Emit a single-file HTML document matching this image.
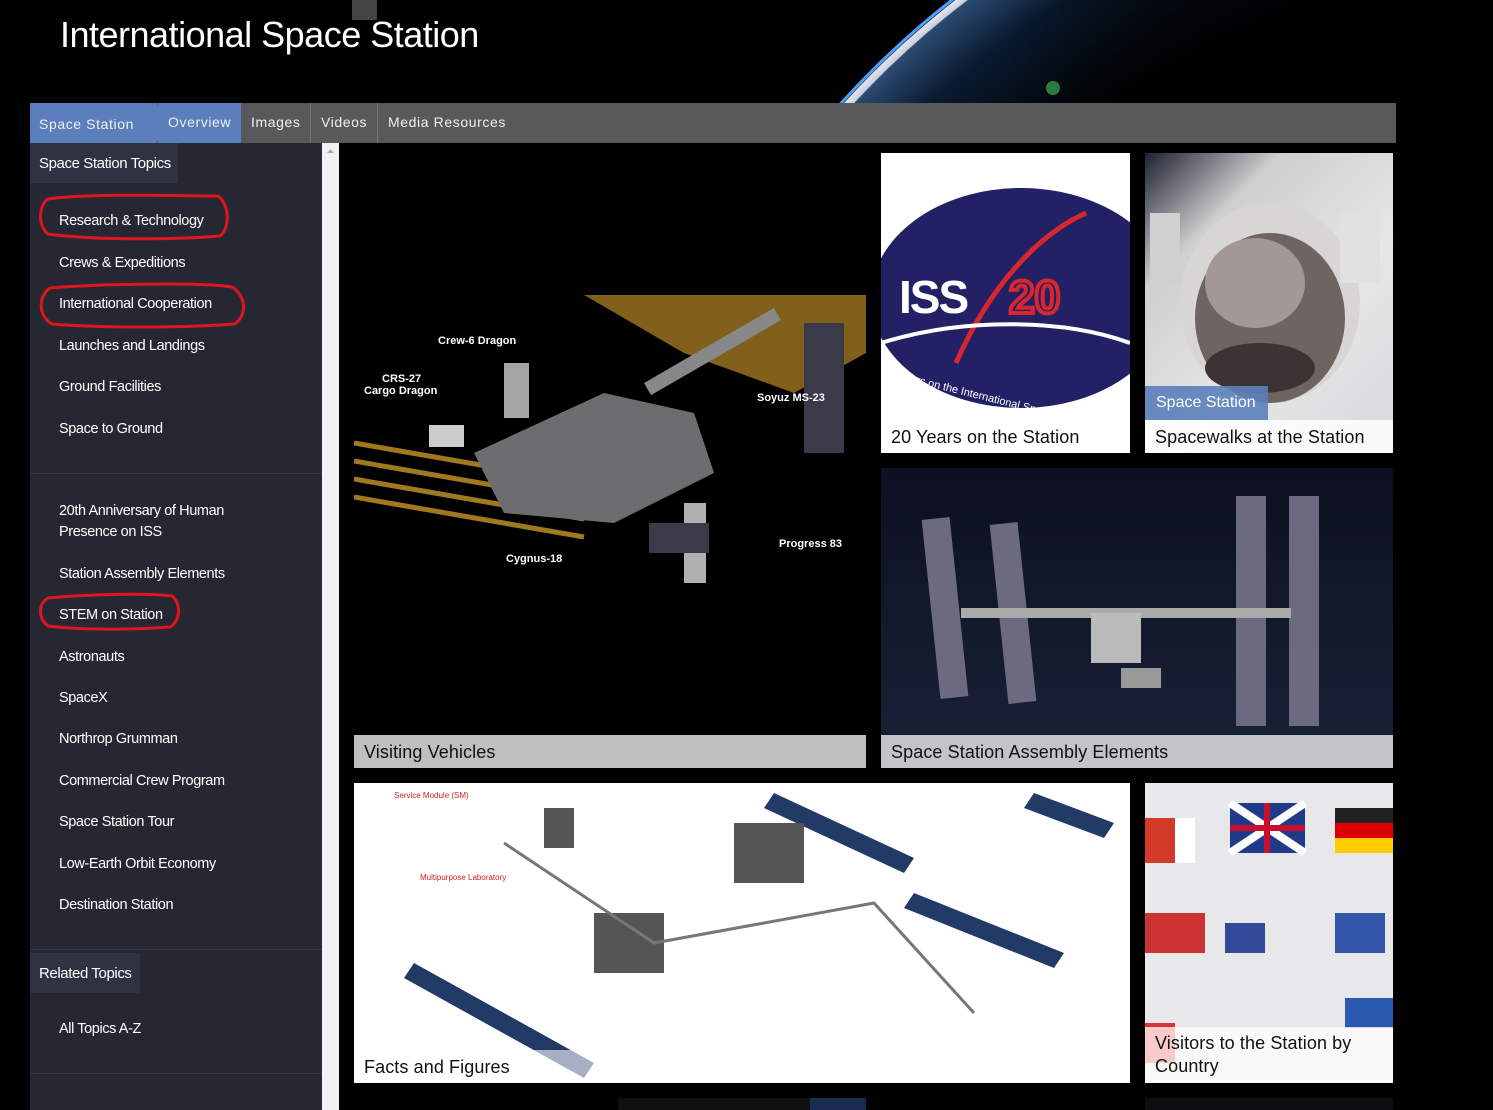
<!DOCTYPE html>
<html style="overflow:hidden"><head><meta charset="utf-8"><style>
*{margin:0;padding:0;box-sizing:border-box}
body{width:1493px;height:1110px;background:#000;overflow:hidden;position:relative;font-family:"Liberation Sans",sans-serif;color:#fff}
.abs{position:absolute}
h1{position:absolute;left:60px;top:14px;font-size:36px;font-weight:normal;letter-spacing:-0.5px;color:#fff}
.nav{position:absolute;left:30px;top:103px;width:1366px;height:40px;background:#595959}
.nav div{position:absolute;top:0;height:40px;line-height:38px;font-size:14px;letter-spacing:0.6px;color:#f0f0f0}
.side{position:absolute;left:30px;top:143px;width:292px;height:967px;background:#252832;overflow:hidden}
.sb{position:absolute;left:322px;top:143px;width:17px;height:967px;background:#f1f1f1}
.hd{position:absolute;left:0;height:40px;background:#2f3240;font-size:15px;line-height:42px;padding-left:9px;letter-spacing:-0.4px}
.it{position:absolute;left:29px;font-size:14.5px;letter-spacing:-0.4px;line-height:21px;color:#fff}
.sep{position:absolute;left:0;width:292px;height:1px;background:#333746}
.cap{position:absolute;left:0;right:0;bottom:0;height:33px;background:rgba(225,225,225,0.85);color:#111;font-size:18px;line-height:34px;padding-left:10px;letter-spacing:0.1px}
.tile{position:absolute;overflow:hidden}
</style></head><body>
<svg class="abs" style="left:0;top:0" width="1493" height="103">
<defs><radialGradient id="rg" cx="1500" cy="700" r="887" gradientUnits="userSpaceOnUse"><stop offset="0.8" stop-color="#000"/><stop offset="0.93" stop-color="#0a1a30"/><stop offset="0.99" stop-color="#2a4a70"/><stop offset="1" stop-color="#d8dce8"/></radialGradient>
<linearGradient id="fade" x1="0" y1="0" x2="1" y2="0"><stop offset="0" stop-color="#000" stop-opacity="0"/><stop offset="1" stop-color="#000"/></linearGradient></defs>
<circle cx="1500" cy="700" r="887" fill="url(#rg)"/>
<circle cx="1500" cy="700" r="889" fill="none" stroke="#4aa0ff" stroke-width="3"/>
<circle cx="1500" cy="700" r="883" fill="none" stroke="#e8e8f0" stroke-width="7" opacity="0.8"/>
<rect x="1000" y="0" width="400" height="103" fill="url(#fade)"/>
<rect x="1390" y="0" width="103" height="103" fill="#000"/>
<circle cx="1053" cy="88" r="7" fill="#2d7a3d"/>
<rect x="352" y="0" width="25" height="20" fill="#444"/>
</svg>
<h1>International Space Station</h1>
<div class="nav">
<div style="left:0;width:126px;background:#5b7fbd;padding-left:9px;line-height:42px">Space Station</div>
<svg class="abs" style="left:126px;top:0" width="14" height="40"><polygon points="0,0 14,20 0,40" fill="#5b7fbd"/></svg>
<div style="left:128px;width:83px;background:#5b7fbd;padding-left:10px">Overview</div>
<div style="left:211px;width:70px;padding-left:10px;border-right:1px solid #777">Images</div>
<div style="left:282px;width:66px;padding-left:9px;border-right:1px solid #777">Videos</div>
<div style="left:349px;padding-left:9px">Media Resources</div>
</div>
<div class="side">
<div class="hd" style="top:0;width:148px">Space Station Topics</div>
<div class="it" style="top:68px">Research &amp; Technology</div>
<div class="it" style="top:110px">Crews &amp; Expeditions</div>
<div class="it" style="top:151px">International Cooperation</div>
<div class="it" style="top:193px">Launches and Landings</div>
<div class="it" style="top:234px">Ground Facilities</div>
<div class="it" style="top:276px">Space to Ground</div>
<div class="sep" style="top:330px"></div>
<div class="it" style="top:358px">20th Anniversary of Human<br>Presence on ISS</div>
<div class="it" style="top:421px">Station Assembly Elements</div>
<div class="it" style="top:462px">STEM on Station</div>
<div class="it" style="top:504px">Astronauts</div>
<div class="it" style="top:545px">SpaceX</div>
<div class="it" style="top:586px">Northrop Grumman</div>
<div class="it" style="top:628px">Commercial Crew Program</div>
<div class="it" style="top:669px">Space Station Tour</div>
<div class="it" style="top:711px">Low-Earth Orbit Economy</div>
<div class="it" style="top:752px">Destination Station</div>
<div class="sep" style="top:806px"></div>
<div class="hd" style="top:810px;width:110px">Related Topics</div>
<div class="it" style="top:876px">All Topics A-Z</div>
<div class="sep" style="top:930px"></div>
</div>
<div class="sb"><svg width="17" height="14"><polygon points="5,10 12,10 8.5,6" fill="#a8a8a8"/></svg></div>
<svg class="abs" style="left:0;top:0;pointer-events:none;z-index:5" width="340" height="1110" fill="none" stroke="#e0141c" stroke-width="3">
<path d="M48,199 C90,193 180,196 218,196 C230,205 230,228 220,236 C170,240 90,240 48,234 C38,226 38,206 48,199 Z"/>
<path d="M50,288 C100,284 200,282 232,287 C248,297 246,318 234,324 C180,328 100,328 52,324 C38,316 38,296 50,288 Z"/>
<path d="M48,598 C90,594 150,593 172,596 C182,604 180,622 170,627 C130,630 80,630 48,626 C38,618 38,604 48,598 Z"/>
</svg>
<div class="tile" style="left:354px;top:153px;width:512px;height:615px;background:#000">
<svg width="512" height="582">
<polygon points="230,142 512,142 512,200 440,240 330,200" fill="#a07820" opacity="0.8"/>
<g stroke="#a07820" stroke-width="5"><line x1="0" y1="290" x2="230" y2="330"/><line x1="0" y1="308" x2="230" y2="348"/><line x1="0" y1="326" x2="230" y2="366"/><line x1="0" y1="344" x2="230" y2="384"/></g>
<polygon points="120,300 250,240 340,260 360,320 260,370 150,360" fill="#6d6d70"/>
<rect x="290" y="230" width="150" height="14" fill="#888" transform="rotate(-30 290 230)"/>
<rect x="330" y="350" width="22" height="80" fill="#b0b0b0"/>
<rect x="150" y="210" width="25" height="55" fill="#a5a5a5"/>
<rect x="75" y="272" width="35" height="22" fill="#ccc"/>
<g fill="#3a3a48"><rect x="450" y="170" width="40" height="130"/><rect x="295" y="370" width="60" height="30"/></g>
<g fill="#fff" font-size="11" font-weight="bold"><text x="84" y="191">Crew-6 Dragon</text><text x="28" y="229">CRS-27</text><text x="10" y="241">Cargo Dragon</text><text x="403" y="248">Soyuz MS-23</text><text x="425" y="394">Progress 83</text><text x="152" y="409">Cygnus-18</text></g>
</svg>
<div class="cap">Visiting Vehicles</div></div>
<div class="tile" style="left:881px;top:153px;width:249px;height:300px;background:#fff">
<svg width="249" height="300"><ellipse cx="140" cy="145" rx="150" ry="110" fill="#232166"/>
<path d="M75,210 C110,130 160,80 205,60" stroke="#d8262e" stroke-width="5" fill="none"/>
<path d="M0,190 C80,165 180,165 249,190" stroke="#fff" stroke-width="4" fill="none"/>
<text x="18" y="160" fill="#fff" font-size="46" font-weight="bold" letter-spacing="-2">ISS</text>
<text x="128" y="160" fill="none" stroke="#d8262e" stroke-width="4" font-size="46" font-weight="bold">20</text>
<text x="2" y="222" fill="#fff" font-size="11" transform="rotate(14 2 222)">20 Years on the International Space Station</text></svg>
<div class="cap" style="background:rgba(255,255,255,0.92)">20 Years on the Station</div></div>
<div class="tile" style="left:1145px;top:153px;width:248px;height:300px;background:linear-gradient(135deg,#1c2030 0%,#cfcfcf 25%,#e6e6e6 60%,#d8d8dc 100%)">
<svg width="248" height="300"><ellipse cx="125" cy="150" rx="90" ry="100" fill="#d8d6d4"/><ellipse cx="125" cy="165" rx="75" ry="85" fill="#6e6462"/><ellipse cx="110" cy="130" rx="50" ry="45" fill="#a49896"/><ellipse cx="115" cy="215" rx="55" ry="25" fill="#3c3432"/><rect x="195" y="60" width="40" height="70" fill="#e0e0e0"/><rect x="5" y="60" width="30" height="70" fill="#d0d0d0"/></svg>
<div class="abs" style="left:0;top:233px;width:123px;height:34px;background:rgba(91,127,189,0.9);font-size:16px;line-height:34px;padding-left:11px">Space Station</div>
<div class="cap" style="background:rgba(255,255,255,0.85)">Spacewalks at the Station</div></div>
<div class="tile" style="left:881px;top:468px;width:512px;height:300px;background:linear-gradient(180deg,#0c1020,#1a2238)">
<svg width="512" height="300"><g fill="#6c6a80"><rect x="50" y="50" width="28" height="180" transform="rotate(-6 64 140)"/><rect x="118" y="55" width="28" height="180" transform="rotate(-6 132 145)"/><rect x="355" y="28" width="30" height="230"/><rect x="408" y="28" width="30" height="230"/></g>
<rect x="80" y="140" width="330" height="10" fill="#aaa"/><rect x="210" y="145" width="50" height="50" fill="#bbb"/><rect x="240" y="200" width="40" height="20" fill="#999"/></svg>
<div class="cap">Space Station Assembly Elements</div></div>
<div class="tile" style="left:354px;top:783px;width:776px;height:300px;background:#fff">
<svg width="776" height="300"><g fill="#223a66"><polygon points="420,10 560,75 550,90 410,25"/><polygon points="560,110 710,170 700,185 550,125"/><polygon points="60,180 240,280 230,295 50,195"/><polygon points="680,10 760,40 750,55 670,25"/></g>
<g fill="#555"><rect x="240" y="130" width="70" height="60"/><rect x="380" y="40" width="70" height="60"/><rect x="190" y="25" width="30" height="40"/></g>
<path d="M150,60 L300,160 L520,120 L620,230" stroke="#777" stroke-width="3" fill="none"/>
<g font-size="8" fill="#c22"><text x="40" y="15">Service Module (SM)</text><text x="66" y="97">Multipurpose Laboratory</text></g></svg>
<div class="cap" style="background:rgba(255,255,255,0.6)">Facts and Figures</div></div>
<div class="tile" style="left:1145px;top:783px;width:248px;height:300px;background:#e8e8ea">
<svg width="248" height="300"><rect x="0" y="35" width="30" height="45" fill="#d43a2a"/><rect x="30" y="35" width="20" height="45" fill="#fff"/>
<rect x="85" y="20" width="75" height="50" fill="#1f3a8a"/><path d="M85,20 L160,70 M160,20 L85,70" stroke="#fff" stroke-width="8"/><path d="M122,20 V70 M85,45 H160" stroke="#c8102e" stroke-width="6"/>
<rect x="190" y="25" width="58" height="15" fill="#222"/><rect x="190" y="40" width="58" height="15" fill="#d00"/><rect x="190" y="55" width="58" height="15" fill="#fc0"/>
<rect x="0" y="130" width="60" height="40" fill="#c33"/><rect x="80" y="140" width="40" height="30" fill="#334a9a"/><rect x="190" y="130" width="50" height="40" fill="#3355aa"/>
<rect x="200" y="215" width="48" height="30" fill="#2a5ab0"/><rect x="0" y="240" width="30" height="40" fill="#d33"/></svg>
<div class="cap" style="height:56px;line-height:23px;padding-top:5px;background:rgba(255,255,255,0.75)">Visitors to the Station by<br>Country</div></div>
<div class="abs" style="left:618px;top:1098px;width:248px;height:12px;background:#111"></div>
<div class="abs" style="left:810px;top:1098px;width:56px;height:12px;background:#1a2a50"></div>
<div class="abs" style="left:1145px;top:1098px;width:248px;height:12px;background:#0e0e10"></div>
</body></html>
